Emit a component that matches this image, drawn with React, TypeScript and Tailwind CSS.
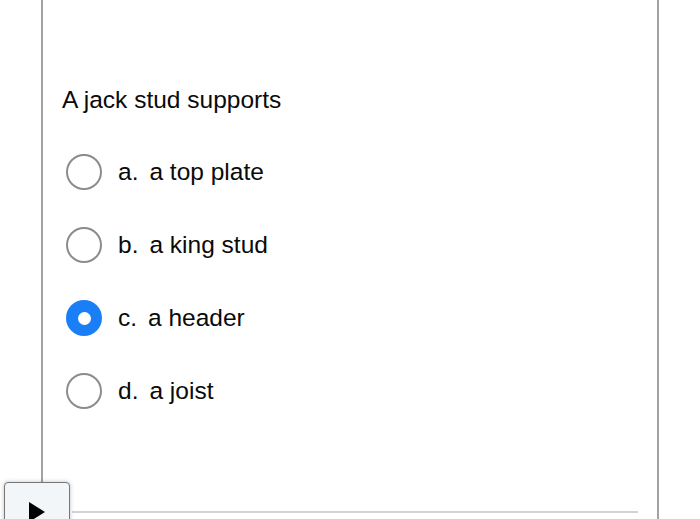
import React from "react";

const options = [
  { label: "a.", text: "a top plate" },
  { label: "b.", text: "a king stud" },
  { label: "c.", text: "a header" },
  { label: "d.", text: "a joist" },
];

export default function App() {
  const selected = 2;

  return (
    <div className="relative h-[519px] w-[700px] overflow-hidden bg-white font-['Liberation_Sans',Arial,sans-serif] text-[#0a0a0a]">
      <div className="ml-[41px] flex h-full w-[618px] flex-col border-x-2 border-[#a2a2a2]">
        <p className="pl-[19px] pt-[86px] text-[24.5px] leading-[28px]">
          A jack stud supports
        </p>

        <div className="mt-[40px] flex flex-col gap-[37px] pl-[23px]">
          {options.map((opt, i) => (
            <label key={opt.label} className="flex h-[36px] items-center">
              {i === selected ? (
                <span className="flex h-[36px] w-[36px] items-center justify-center rounded-full bg-[#1a7ff6]">
                  <span className="h-[13px] w-[13px] rounded-full bg-white" />
                </span>
              ) : (
                <span className="h-[36px] w-[36px] rounded-full border-[2.5px] border-[#8c8c8c] bg-white" />
              )}
              <span className="ml-[16px] text-[24.5px] leading-[28px]">
                <span className="mr-[11px]">{opt.label}</span>
                {opt.text}
              </span>
            </label>
          ))}
        </div>

        <div className="mb-[6px] ml-[29px] mt-auto h-[2px] w-[566px] bg-[#d3d3d3]" />
      </div>

      <button className="absolute left-[4px] top-[482px] flex h-[60px] w-[66px] justify-center rounded-[4px] border-[1.5px] border-[#777] bg-[#f3f6f9] pt-[19px] shadow-[0_0_4px_rgba(0,0,0,0.25)]">
        <svg width="18" height="20" viewBox="0 0 18 20">
          <path d="M1 0 L17 10 L1 20 Z" fill="#000" />
        </svg>
      </button>
    </div>
  );
}
